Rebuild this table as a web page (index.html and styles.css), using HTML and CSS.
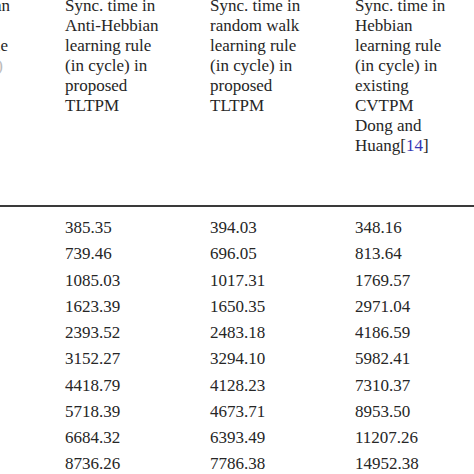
FILE: index.html
```html
<!DOCTYPE html>
<html>
<head>
<meta charset="utf-8">
<link rel="stylesheet" href="styles.css">
</head>
<body>
<div class="page">
  <div class="head">
    <div class="cell first">
      <div class="frag"><span>Hebbian</span></div>
      <div class="frag f2"><span>learning</span></div>
      <div class="frag f3"><span>rule</span></div>
      <div class="frag f4"><span>(in cycle)</span></div>
    </div>
    <div class="cell">Sync. time in<br>Anti-Hebbian<br>learning rule<br>(in cycle) in<br>proposed<br>TLTPM</div>
    <div class="cell">Sync. time in<br>random walk<br>learning rule<br>(in cycle) in<br>proposed<br>TLTPM</div>
    <div class="cell">Sync. time in<br>Hebbian<br>learning rule<br>(in cycle) in<br>existing<br>CVTPM<br>Dong and<br>Huang[<span class="ref">14</span>]</div>
  </div>
  <div class="body">
    <div class="row"><div></div><div>385.35</div><div>394.03</div><div>348.16</div></div>
    <div class="row"><div></div><div>739.46</div><div>696.05</div><div>813.64</div></div>
    <div class="row"><div></div><div>1085.03</div><div>1017.31</div><div>1769.57</div></div>
    <div class="row"><div></div><div>1623.39</div><div>1650.35</div><div>2971.04</div></div>
    <div class="row"><div></div><div>2393.52</div><div>2483.18</div><div>4186.59</div></div>
    <div class="row"><div></div><div>3152.27</div><div>3294.10</div><div>5982.41</div></div>
    <div class="row"><div></div><div>4418.79</div><div>4128.23</div><div>7310.37</div></div>
    <div class="row"><div></div><div>5718.39</div><div>4673.71</div><div>8953.50</div></div>
    <div class="row"><div></div><div>6684.32</div><div>6393.49</div><div>11207.26</div></div>
    <div class="row"><div></div><div>8736.26</div><div>7786.38</div><div>14952.38</div></div>
  </div>
</div>
</body>
</html>
```
FILE: styles.css
```css
html, body {
  margin: 0;
  padding: 0;
  background: #ffffff;
}
body {
  width: 474px;
  height: 474px;
  overflow: hidden;
}
.page {
  font-family: "Liberation Serif", "Times New Roman", serif;
  font-size: 17px;
  color: #262626;
  width: 474px;
}
.head {
  display: grid;
  grid-template-columns: 65px 145px 145px 119px;
  line-height: 20px;
  margin-top: -4px;
  height: 209px;
}
.cell {
  white-space: nowrap;
}
.first {
  overflow: hidden;
}
.frag {
  width: 10px;
  height: 20px;
  display: flex;
  justify-content: flex-end;
}
.frag span {
  white-space: nowrap;
  flex: none;
}
.f2 { width: 0; margin-left: -6px; }
.f3 { width: 8px; }
.f4 { width: 3px; color: #bbbbbb; }
.ref {
  color: #3434b4;
}
.body {
  border-top: 2px solid #3a3a3a;
  padding-top: 8px;
}
.row {
  display: grid;
  grid-template-columns: 65px 145px 145px 119px;
  height: 26.25px;
  line-height: 26.25px;
  white-space: nowrap;
}
```
